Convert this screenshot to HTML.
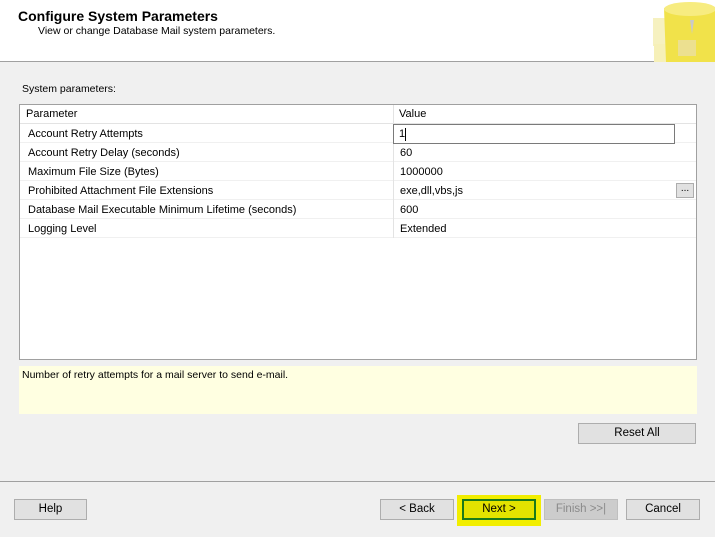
<!DOCTYPE html><html><head><style>
*{margin:0;padding:0;box-sizing:border-box}
body{width:715px;height:537px;background:#f0f0f0;font-family:"Liberation Sans",sans-serif;font-size:11px;color:#000;position:relative;overflow:hidden}
.a{position:absolute}
.hdr{left:0;top:0;width:715px;height:62px;background:#fff;border-bottom:1px solid #a0a0a0}
.row{position:absolute;left:0;width:676px;height:19px;border-bottom:1px solid #f0f0f0}
.row span{position:absolute;top:4px}
.btn{position:absolute;height:21px;background:#e1e1e1;border:1px solid #adadad;text-align:center;line-height:19px;font-size:11.5px}
</style></head><body>
<div class="a hdr">
<div class="a" style="left:18px;top:8px;font-weight:bold;font-size:14px">Configure System Parameters</div>
<div class="a" style="left:38px;top:25px;font-size:10.5px">View or change Database Mail system parameters.</div>
<svg class="a" style="left:650px;top:0" width="65" height="62"><rect x="3" y="18" width="18" height="28" fill="#f6f1c0"/><rect x="4" y="44" width="16" height="18" fill="#f6f0b8"/><path d="M14 8 L65 8 L65 62 L16 62 Z" fill="#f1e24a"/><ellipse cx="40" cy="9" rx="26" ry="7" fill="#f7ec80"/><rect x="28" y="40" width="18" height="16" fill="#ece090"/><path d="M40 20 L44 20 L42 34 Z" fill="#c9c9c9"/></svg>
</div>
<div class="a" style="left:22px;top:83px;font-size:10.5px">System parameters:</div>
<div class="a" style="left:19px;top:104px;width:678px;height:256px;background:#fff;border:1px solid #a0a0a0">
<div class="row" style="top:0;border-bottom:1px solid #e3e3e3"><span style="left:6px;top:3px">Parameter</span><span style="left:379px;top:3px">Value</span></div>
<div class="row" style="top:19px"><span style="left:8px">Account Retry Attempts</span></div>
<div class="row" style="top:38px"><span style="left:8px">Account Retry Delay (seconds)</span><span style="left:380px">60</span></div>
<div class="row" style="top:57px"><span style="left:8px">Maximum File Size (Bytes)</span><span style="left:380px">1000000</span></div>
<div class="row" style="top:76px"><span style="left:8px">Prohibited Attachment File Extensions</span><span style="left:380px">exe,dll,vbs,js</span></div>
<div class="row" style="top:95px"><span style="left:8px">Database Mail Executable Minimum Lifetime (seconds)</span><span style="left:380px">600</span></div>
<div class="row" style="top:114px"><span style="left:8px">Logging Level</span><span style="left:380px">Extended</span></div>
<div class="a" style="left:373px;top:0;width:1px;height:133px;background:#e3e3e3"></div>
<div class="a" style="left:373px;top:19px;width:282px;height:20px;border:1px solid #7a7a7a;background:#fff"><span class="a" style="left:5px;top:3px">1</span><span class="a" style="left:11px;top:3px;width:1px;height:13px;background:#000"></span></div>
<div class="a" style="left:656px;top:78px;width:18px;height:15px;background:#e1e1e1;border:1px solid #adadad;font-size:10px;text-align:center;line-height:10px">...</div>
</div>
<div class="a" style="left:19px;top:366px;width:678px;height:48px;background:#ffffe1"><span class="a" style="left:3px;top:3px;font-size:10.5px">Number of retry attempts for a mail server to send e-mail.</span></div>
<div class="btn" style="left:578px;top:423px;width:118px">Reset All</div>
<div class="a" style="left:0;top:481px;width:715px;height:1px;background:#a0a0a0"></div>
<div class="btn" style="left:14px;top:499px;width:73px">Help</div>
<div class="btn" style="left:380px;top:499px;width:74px">&lt; Back</div>
<div class="a" style="left:457px;top:495px;width:84px;height:31px;background:#f2ee00"></div>
<div class="btn" style="left:462px;top:499px;width:74px;background:#e3e300;border:2px solid #1a7a1a;line-height:17px">Next &gt;</div>
<div class="btn" style="left:544px;top:499px;width:74px;background:#cccccc;border-color:#bfbfbf;color:#8a8a8a">Finish &gt;&gt;|</div>
<div class="btn" style="left:626px;top:499px;width:74px">Cancel</div>
</body></html>
